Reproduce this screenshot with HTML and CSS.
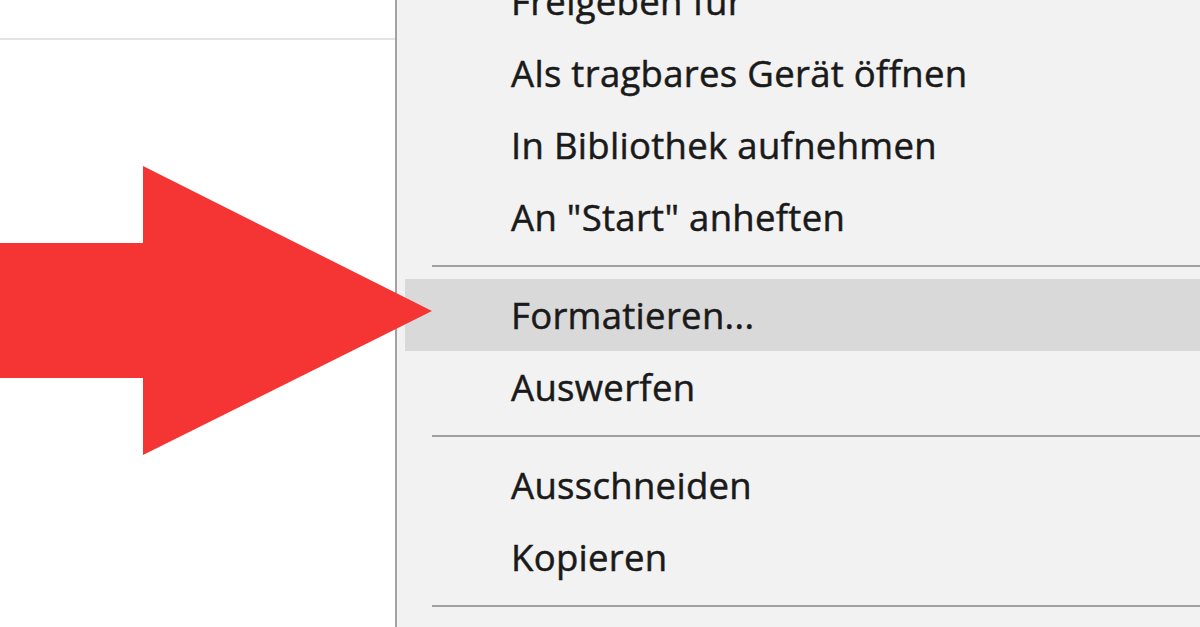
FILE: index.html
```html
<!DOCTYPE html>
<html lang="de">
<head>
<meta charset="utf-8">
<title>Kontextmenü</title>
<link rel="stylesheet" href="styles.css">
</head>
<body>
<div class="screen">
  <div class="pane">
    <div class="pane-line"></div>
  </div>
  <div class="menu">
    <ul class="menu-list">
      <li class="item">Freigeben für</li>
      <li class="item">Als tragbares Gerät öffnen</li>
      <li class="item">In Bibliothek aufnehmen</li>
      <li class="item">An "Start" anheften</li>
      <li class="sep"></li>
      <li class="item hover">Formatieren...</li>
      <li class="item">Auswerfen</li>
      <li class="sep"></li>
      <li class="item">Ausschneiden</li>
      <li class="item">Kopieren</li>
      <li class="sep"></li>
    </ul>
  </div>
  <svg class="arrow" width="1200" height="627" viewBox="0 0 1200 627" aria-hidden="true">
    <polygon points="0,243 143,243 143,166 432,311 143,455 143,378 0,378" fill="#f53434"/>
  </svg>
</div>
</body>
</html>
```
FILE: styles.css
```css
html, body {
  margin: 0;
  padding: 0;
  background: #ffffff;
}

.screen {
  position: relative;
  display: flex;
  width: 1200px;
  height: 627px;
  overflow: hidden;
  font-family: "Open Sans", "Noto Sans", "DejaVu Sans", sans-serif;
}

.pane {
  width: 395px;
  flex: 0 0 395px;
  background: #ffffff;
}

.pane-line {
  margin-top: 38px;
  height: 2px;
  background: #e4e4e4;
}

.menu {
  flex: 1;
  background: #f2f2f2;
  border-left: 2px solid #a2a2a2;
  padding-left: 8px;
}

.menu-list {
  list-style: none;
  margin: -35px 0 0 0;
  padding: 0;
}

.item {
  height: 72px;
  display: flex;
  align-items: center;
  padding-left: 106px;
  font-size: 36.5px;
  letter-spacing: 0.3px;
  color: #1a1a1a;
  white-space: nowrap;
  -webkit-text-stroke: 0.5px #1a1a1a;
}

.item.hover {
  background: #d9d9d9;
}

.sep {
  height: 26px;
  display: flex;
  align-items: center;
  padding-left: 27px;
}

.sep::before {
  content: "";
  display: block;
  flex: 1;
  height: 2px;
  background: #a0a0a0;
}

.arrow {
  position: absolute;
  left: 0;
  top: 0;
  pointer-events: none;
}
```
